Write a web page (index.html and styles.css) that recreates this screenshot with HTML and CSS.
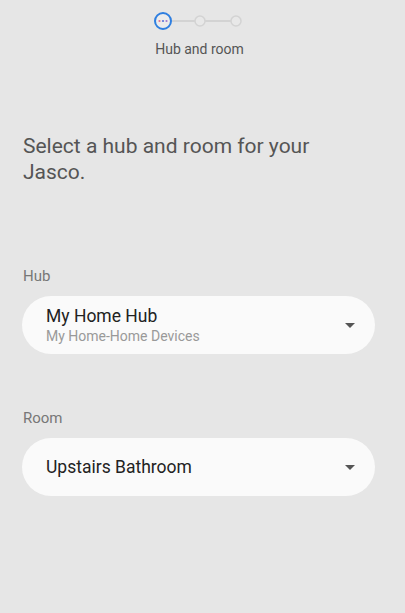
FILE: index.html
```html
<!DOCTYPE html>
<html lang="en">
  <head>
    <meta charset="UTF-8" />
    <meta name="viewport" content="width=device-width, initial-scale=1.0" />
    <title>Hub and room</title>
    <link rel="stylesheet" href="styles.css">
  </head>
  <body>
    <div class="stepper">
      <svg class="steps" width="100" height="24" viewBox="0 0 100 24">
        <line x1="22" y1="12" x2="45" y2="12" stroke="#d3d3d3" stroke-width="2" />
        <line x1="55" y1="12" x2="81" y2="12" stroke="#d3d3d3" stroke-width="2" />
        <circle cx="13" cy="12" r="8" fill="#ececec" stroke="#2f7fe0" stroke-width="2" />
        <circle cx="9.5" cy="12" r="1.1" fill="#e2708f" />
        <circle cx="13" cy="12" r="1.1" fill="#5a72d8" />
        <circle cx="16.5" cy="12" r="1.1" fill="#a07ad0" />
        <circle cx="50" cy="12" r="5" fill="#e8e8e8" stroke="#d3d3d3" stroke-width="1.5" />
        <circle cx="86" cy="12" r="5" fill="#e8e8e8" stroke="#d3d3d3" stroke-width="1.5" />
      </svg>
      <div class="step-title">Hub and room</div>
    </div>

    <h1 class="heading">Select a hub and room for your Jasco.</h1>

    <div class="field hub-field">
      <label class="field-label">Hub</label>
      <div class="select">
        <div class="select-text">
          <div class="select-value">My Home Hub</div>
          <div class="select-sub">My Home-Home Devices</div>
        </div>
        <span class="caret"></span>
      </div>
    </div>

    <div class="field room-field">
      <label class="field-label">Room</label>
      <div class="select">
        <div class="select-text">
          <div class="select-value">Upstairs Bathroom</div>
        </div>
        <span class="caret"></span>
      </div>
    </div>
  </body>
</html>
```

FILE: styles.css
```css
body {
  margin: 0;
  background-color: #e6e6e6;
  font-family: Roboto, "Noto Sans", sans-serif;
  color: #222;
}

.stepper {
  display: flex;
  flex-direction: column;
  align-items: center;
  padding: 9px 6px 0 0;
}

.steps {
  display: block;
}

.step-title {
  margin-top: 8px;
  font-size: 14px;
  line-height: 17px;
  color: #555;
}

.heading {
  margin: 75px 0 0;
  padding: 0 23px;
  width: 320px;
  font-size: 21px;
  line-height: 26px;
  font-weight: 400;
  color: #555;
}

.field {
  padding: 0 30px 0 22px;
}

.hub-field {
  margin-top: 82px;
}

.room-field {
  margin-top: 55px;
}

.field-label {
  display: block;
  padding-left: 1px;
  font-size: 15px;
  line-height: 18px;
  color: #777;
}

.select {
  display: flex;
  align-items: center;
  height: 58px;
  margin-top: 11px;
  padding: 0 20px 0 24px;
  border-radius: 29px;
  background-color: #fafafa;
}

.select-text {
  flex: 1;
}

.select-value {
  font-size: 17.5px;
  line-height: 21px;
  color: #222;
}

.select-sub {
  margin-top: 1px;
  font-size: 14px;
  line-height: 17px;
  color: #999;
}

.caret {
  width: 0;
  height: 0;
  border-left: 5px solid transparent;
  border-right: 5px solid transparent;
  border-top: 5px solid #555;
}
```
